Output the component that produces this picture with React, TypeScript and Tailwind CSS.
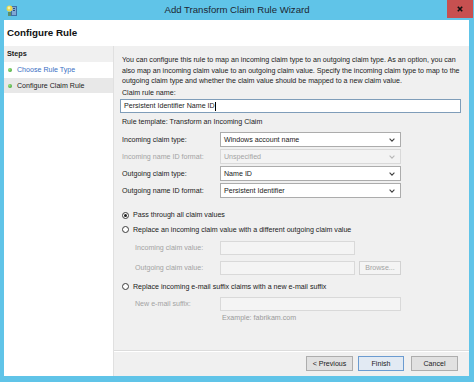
import React from "react";

const F = "font-['Liberation_Sans',Arial,sans-serif]";

function Chevron({ color = "#404040" }: { color?: string }) {
  return (
    <svg width="6" height="4" viewBox="0 0 6 4" className="shrink-0">
      <path d="M0.6 0.6 L3 3.1 L5.4 0.6" fill="none" stroke={color} strokeWidth="1.1" />
    </svg>
  );
}

function Select({ value, disabled }: { value: string; disabled?: boolean }) {
  return (
    <div
      className={`w-[181px] h-[15px] border flex items-center pl-[3px] pr-[5px] ${
        disabled
          ? "bg-[#f3f3f3] border-[#d9d9d9] text-[#a3a3a3]"
          : "bg-white border-[#acacac] text-[#1a1a1a]"
      }`}
    >
      <span className="flex-1 whitespace-nowrap">{value}</span>
      <Chevron color={disabled ? "#b8b8b8" : "#404040"} />
    </div>
  );
}

function Radio({ checked, label }: { checked?: boolean; label: string }) {
  return (
    <div className="h-[14.5px] flex items-center">
      <div className="w-[7px] h-[7px] rounded-full border border-[#3c3c3c] bg-white flex items-center justify-center">
        {checked && <div className="w-[3px] h-[3px] rounded-full bg-[#1e1e1e]" />}
      </div>
      <span className="ml-[4px] whitespace-nowrap">{label}</span>
    </div>
  );
}

function Dot() {
  return (
    <div className="w-[4px] h-[4px] rounded-full bg-[radial-gradient(circle_at_35%_35%,#9be27a,#2f9a2f)]" />
  );
}

function Btn({ label, def, w }: { label: string; def?: boolean; w: string }) {
  return (
    <div
      className={`${w} h-[15px] border flex items-center justify-center ${
        def ? "border-[#6b9bd0] bg-[#e2eaf3]" : "border-[#adadad] bg-[#e1e1e1]"
      }`}
    >
      {label}
    </div>
  );
}

export default function App() {
  return (
    <div className={`w-[474px] h-[382px] bg-[#60c4e8] flex flex-col ${F} text-[7.1px] leading-[10px] text-[#1b1b1b]`}>
      {/* title bar */}
      <div className="h-[20px] grid grid-cols-[60px_1fr_60px] items-start">
        <div className="pl-[5px] pt-[4px]">
          <svg width="13" height="13" viewBox="0 0 13 13">
            <rect x="6" y="2" width="6" height="10" fill="#3e6fa6" />
            <rect x="7" y="3" width="4" height="8" fill="#7fa8d4" />
            <rect x="8" y="4" width="2" height="1" fill="#2c4f7a" />
            <rect x="8" y="6" width="2" height="1" fill="#2c4f7a" />
            <circle cx="4.5" cy="4.5" r="3" fill="#e9d84a" />
            <circle cx="4" cy="4" r="1.4" fill="#f8f2a6" />
            <rect x="3" y="8" width="3" height="4" fill="#5b8f6b" />
          </svg>
        </div>
        <div className="h-[20px] flex items-center justify-center text-[9.6px] text-[#1c2733] whitespace-nowrap">
          Add Transform Claim Rule Wizard
        </div>
        <div className="flex justify-end pr-[1px]">
          <div className="w-[26px] h-[18px] bg-[#c75050] flex items-center justify-center">
            <svg width="6" height="6" viewBox="0 0 6 6">
              <path d="M0.8 0.8 L5.2 5.2 M5.2 0.8 L0.8 5.2" stroke="#111" strokeWidth="1.6" />
            </svg>
          </div>
        </div>
      </div>

      {/* frame */}
      <div className="flex-1 ml-[4px] mr-[5px] mb-[6px] bg-white flex flex-col">
        <div className="h-[26px] flex items-center pl-[3px] font-bold text-[9.8px] text-[#111]">Configure Rule</div>
        <div className="flex-1 flex">
          {/* steps */}
          <div className="w-[109px] flex flex-col">
            <div className="h-[16px] bg-[#f0f0f0] flex items-center pl-[3px] font-bold text-[7.3px]">Steps</div>
            <div className="h-[15px] flex items-center pl-[4px] text-[#3a6fc4]">
              <Dot />
              <span className="ml-[5px]">Choose Rule Type</span>
            </div>
            <div className="h-[15px] mt-[1px] bg-[#e8e8e8] flex items-center pl-[4px]">
              <Dot />
              <span className="ml-[5px]">Configure Claim Rule</span>
            </div>
          </div>
          <div className="w-px bg-[#e0e0e0]" />
          {/* content */}
          <div className="flex-1 bg-[#f0f0f0] flex flex-col">
            <div className="flex-1 flex flex-col pl-[8px] pt-[9px]">
              <div className="leading-[10.5px] whitespace-nowrap">
                <div>You can configure this rule to map an incoming claim type to an outgoing claim type. As an option, you can</div>
                <div>also map an incoming claim value to an outgoing claim value. Specify the incoming claim type to map to the</div>
                <div>outgoing claim type and whether the claim value should be mapped to a new claim value.</div>
              </div>
              <div className="mt-[1.5px]">Claim rule name:</div>
              <div className="mt-[1px] -ml-[2px] w-[341px] h-[14px] bg-white border border-[#7f9db9] flex items-center pl-[3px]">
                <span>Persistent Identifier Name ID</span>
                <span className="w-px h-[9px] bg-black ml-[0.5px]" />
              </div>
              <div className="mt-[3.5px]">Rule template: Transform an Incoming Claim</div>

              <div className="mt-[5.5px] flex flex-col gap-[2px]">
                <div className="flex items-center">
                  <div className="w-[98px]">Incoming claim type:</div>
                  <Select value="Windows account name" />
                </div>
                <div className="flex items-center">
                  <div className="w-[98px] text-[#a3a3a3]">Incoming name ID format:</div>
                  <Select value="Unspecified" disabled />
                </div>
                <div className="flex items-center">
                  <div className="w-[98px]">Outgoing claim type:</div>
                  <Select value="Name ID" />
                </div>
                <div className="flex items-center">
                  <div className="w-[98px]">Outgoing name ID format:</div>
                  <Select value="Persistent Identifier" />
                </div>
              </div>

              <div className="mt-[9.75px]">
                <Radio checked label="Pass through all claim values" />
                <Radio label="Replace an incoming claim value with a different outgoing claim value" />
              </div>
              <div className="mt-[4.25px] flex items-center text-[#a3a3a3]">
                <div className="w-[98px] pl-[13px]">Incoming claim value:</div>
                <div className="w-[135px] h-[14px] bg-[#f4f4f4] border border-[#d9d9d9]" />
              </div>
              <div className="mt-[6px] flex items-center text-[#a3a3a3]">
                <div className="w-[98px] pl-[13px]">Outgoing claim value:</div>
                <div className="w-[135px] h-[14px] bg-[#f4f4f4] border border-[#d9d9d9]" />
                <div className="ml-[4px] w-[42px] h-[14px] bg-[#f4f4f4] border border-[#d2d2d2] flex items-center justify-center">
                  Browse...
                </div>
              </div>
              <div className="mt-[4.25px]">
                <Radio label="Replace incoming e-mail suffix claims with a new e-mail suffix" />
              </div>
              <div className="mt-[3.25px] flex items-center text-[#a3a3a3]">
                <div className="w-[98px] pl-[13px]">New e-mail suffix:</div>
                <div className="w-[181px] h-[14px] bg-[#f4f4f4] border border-[#d9d9d9]" />
              </div>
              <div className="mt-[2px] pl-[100px] text-[#9a9a9a]">Example: fabrikam.com</div>
            </div>
            <div className="h-px bg-[#dcdcdc]" />
            <div className="h-px bg-white" />
            <div className="h-[24px] flex items-start justify-end pt-[4px] pr-[11px]">
              <Btn label="< Previous" w="w-[47px]" />
              <div className="w-[5px]" />
              <Btn label="Finish" def w="w-[46px]" />
              <div className="w-[7px]" />
              <Btn label="Cancel" w="w-[47px]" />
            </div>
          </div>
        </div>
      </div>
    </div>
  );
}
